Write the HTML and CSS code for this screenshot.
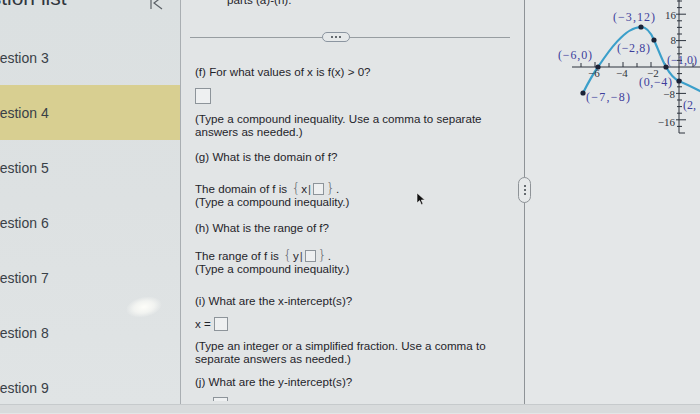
FILE: index.html
```html
<!DOCTYPE html>
<html lang="en">
<head>
<meta charset="utf-8">
<title>Question list</title>
<link rel="stylesheet" href="styles.css">
</head>
<body>
<div class="app">
  <aside class="sidebar">
    <div class="sidebar-head">
      <span class="sidebar-title">Question list</span>
      <svg class="collapse-icon" viewBox="0 0 16 16" width="16" height="16"><path d="M3 1V13M14 1L6 7L14 13" fill="none" stroke="#5b6167" stroke-width="1.2"/></svg>
    </div>
    <ul class="q-list">
      <li class="q-item"><span class="q-label">Question 3</span></li>
      <li class="q-item active"><span class="q-label">Question 4</span></li>
      <li class="q-item"><span class="q-label">Question 5</span></li>
      <li class="q-item"><span class="q-label">Question 6</span></li>
      <li class="q-item"><span class="q-label">Question 7</span></li>
      <li class="q-item"><span class="q-label">Question 8</span></li>
      <li class="q-item"><span class="q-label">Question 9</span></li>
    </ul>
    <span class="glare"></span>
  </aside>

  <main class="main">
    <div class="main-scroll">
      <p class="line intro">parts (a)-(h).</p>
      <div class="divider-row">
        <span class="rule rule-left"></span>
        <span class="more-btn"><i></i><i></i><i></i></span>
        <span class="rule"></span>
      </div>
      <p class="line q-f">(f) For what values of x is f(x) &gt; 0?</p>
      <span class="answer-box box-f"></span>
      <p class="line hint-f">(Type a compound inequality. Use a comma to separate<br>answers as needed.)</p>
      <p class="line q-g">(g) What is the domain of f?</p>
      <p class="line ans-g">The domain of f is <span class="brace">{</span>x<span class="bar">|</span><span class="answer-box small"></span><span class="brace">}</span>.</p>
      <p class="line">(Type a compound inequality.)</p>
      <p class="line q-h">(h) What is the range of f?</p>
      <p class="line ans-h">The range of f is <span class="brace">{</span>y<span class="bar">|</span><span class="answer-box small"></span><span class="brace">}</span>.</p>
      <p class="line">(Type a compound inequality.)</p>
      <p class="line q-i">(i) What are the x-intercept(s)?</p>
      <p class="line ans-i">x = <span class="answer-box mid"></span></p>
      <p class="line hint-i">(Type an integer or a simplified fraction. Use a comma to<br>separate answers as needed.)</p>
      <p class="line q-j">(j) What are the y-intercept(s)?</p>
      <span class="answer-box box-j"></span>
    </div>
    <svg class="cursor" viewBox="0 0 10 14" width="10" height="14"><path d="M1 1L1 11L3.6 8.6L5.4 12.8L7 12.1L5.3 8L8.8 8Z" fill="#111" stroke="#f4f4f4" stroke-width="0.6"/></svg>
  </main>

  <div class="splitter"><span class="handle"><i></i><i></i><i></i></span></div>

  <section class="graph-panel">
    <svg class="graph" viewBox="525 0 175 140" width="175" height="140">
      <g stroke="#2c333d" stroke-width="1" fill="none">
        <path d="M679 0V133H685"/>
        <path d="M572 67H700"/>
        <path d="M677 1H682M677 7.6H682M676 14.2H686M677 20.8H682M677 27.4H682M677 34H682M676 40.6H686M677 47.2H682M677 53.8H682M677 60.4H682M677 73.6H682M677 80.2H682M677 86.8H682M676 93.4H686M677 100H682M677 106.6H682M677 113.2H682M676 119.8H686M677 126.4H682"/>
        <path d="M581 67V63M595 67V62M609 67V63M623 67V62M637 67V63M651 67V62M665 67V63M693 67V63"/>
      </g>
      <path d="M583 93C588 83 593 74 598 67C608 52 625 27 641 27C647 27 651 33 654 40C658 49 662 60 666 67C670 74 674 79 679 81C686 84 694 88 702 92" fill="none" stroke="#3b9fca" stroke-width="2.2"/>
      <g fill="#1b2236">
        <circle cx="583" cy="93" r="2.6"/>
        <circle cx="598" cy="67" r="2.6"/>
        <circle cx="641" cy="27" r="2.6"/>
        <circle cx="654" cy="40" r="2.6"/>
        <circle cx="666" cy="67" r="2.6"/>
        <circle cx="679" cy="81" r="2.6"/>
      </g>
      <g class="pt-label">
        <text x="613" y="21" textLength="42">(−3,12)</text>
        <text x="558" y="59" textLength="34">(−6,0)</text>
        <text x="617" y="52" textLength="33">(−2,8)</text>
        <text x="667" y="64" textLength="30">(−1,0)</text>
        <text x="639" y="86" textLength="33">(0,−4)</text>
        <text x="586" y="101" textLength="44">(−7,−8)</text>
        <text x="683" y="109">(2,</text>
      </g>
      <g class="axis-label">
        <text x="676" y="19" text-anchor="end">16</text>
        <text x="676" y="44" text-anchor="end">8</text>
        <text x="675" y="98" text-anchor="end">−8</text>
        <text x="675" y="126" text-anchor="end">−16</text>
        <text x="588" y="77">−6</text>
        <text x="616" y="77">−4</text>
        <text x="647" y="77">−2</text>
      </g>
    </svg>
  </section>
</div>
<div class="footer-strip"></div>
</body>
</html>
```

FILE: styles.css
```css
* { box-sizing: border-box; }

html, body {
  margin: 0;
  padding: 0;
}

body {
  width: 700px;
  height: 414px;
  overflow: hidden;
  background: #e3e6e7;
  font-family: "Liberation Sans", Arial, sans-serif;
  color: #1f242a;
}

.app {
  display: flex;
  height: 405px;
  border-bottom: 1px solid #c6cacc;
}

/* ---------- sidebar ---------- */
.sidebar {
  position: relative;
  flex: none;
  width: 181px;
  border-right: 1px solid #a9aeb2;
  background: linear-gradient(180deg, #dbe0e1 0%, #dde1e2 50%, #e0e4e5 100%);
  overflow: hidden;
  display: flex;
  flex-direction: column;
}

.sidebar-head {
  flex: none;
  height: 30px;
  display: flex;
  justify-content: space-between;
  align-items: flex-start;
}

.sidebar-title {
  margin: -13px 0 0 -49px;
  font-size: 21px;
  line-height: 21px;
  color: #30363d;
  white-space: nowrap;
}

.collapse-icon {
  flex: none;
  margin: -4px 16px 0 0;
}

.q-list {
  list-style: none;
  margin: 0;
  padding: 0;
}

.q-item {
  height: 55px;
  display: flex;
  align-items: center;
  font-size: 14px;
  color: #394047;
  white-space: nowrap;
}

.q-item.active {
  background: #d8cf91;
}

.q-label {
  margin-left: -19px;
}

.glare {
  position: absolute;
  left: 126px;
  top: 297px;
  width: 36px;
  height: 20px;
  border-radius: 50%;
  background: radial-gradient(ellipse at center, rgba(255,255,250,0.95) 0%, rgba(255,255,250,0.6) 40%, rgba(255,255,250,0) 72%);
  transform: rotate(-12deg);
}

/* ---------- main ---------- */
.main {
  position: relative;
  flex: none;
  width: 343px;
  background: #e2e5e6;
}

.main-scroll {
  height: 401px;
  overflow: hidden;
  padding-left: 14px;
}

.line {
  margin: 0;
  font-size: 11.6px;
  line-height: 13px;
  white-space: nowrap;
}

.intro {
  margin-top: -7px;
  margin-left: 32px;
}

.divider-row {
  display: flex;
  align-items: center;
  height: 12px;
  margin: 25px 14px 0 -5px;
}

.rule {
  flex: 1;
  height: 1px;
  background: #979da1;
}

.rule-left {
  flex: 0 0 132px;
}

.more-btn {
  flex: none;
  width: 28px;
  height: 10px;
  border: 1px solid #8b95a0;
  border-radius: 6px;
  background: #e6e9ea;
  display: flex;
  align-items: center;
  justify-content: center;
  gap: 2px;
}

.more-btn i,
.handle i {
  display: block;
  width: 2px;
  height: 2px;
  border-radius: 50%;
  background: #3a4047;
}

.answer-box {
  display: inline-block;
  border: 1px solid #8d949a;
  background: #eef0f1;
  vertical-align: middle;
}

.box-f {
  display: block;
  width: 16px;
  height: 16px;
  margin-top: 10px;
}

.answer-box.small {
  width: 11px;
  height: 12px;
  margin: -2px 1px 0 2px;
}

.answer-box.mid {
  width: 14px;
  height: 14px;
  margin-top: -2px;
}

.box-j {
  display: block;
  width: 15px;
  height: 14px;
  margin: 9px 0 0 18px;
}

.brace {
  font-family: "DejaVu Sans", sans-serif;
  font-weight: 300;
  font-size: 14px;
  color: #5c6268;
  margin: 0 1px;
}

.bar {
  color: #444a50;
  margin: 0 0 0 1px;
}

.hint-f { margin-top: 8px; }
.q-f { margin-top: 22px; }
.q-g { margin-top: 12px; }
.ans-g { margin-top: 19px; }
.q-h { margin-top: 13px; }
.ans-h { margin-top: 15px; }
.q-i { margin-top: 19px; }
.ans-i { margin-top: 10px; }
.hint-i { margin-top: 8px; }
.q-j { margin-top: 10px; }

.cursor {
  position: absolute;
  left: 235px;
  top: 192px;
}

/* ---------- splitter ---------- */
.splitter {
  position: relative;
  flex: none;
  width: 1px;
  background: #8e9397;
}

.handle {
  position: absolute;
  left: -6px;
  top: 177px;
  width: 13px;
  height: 26px;
  border: 1px solid #8e9397;
  border-radius: 7px;
  background: #e6e9ea;
  display: flex;
  flex-direction: column;
  align-items: center;
  justify-content: center;
  gap: 2px;
}

/* ---------- graph ---------- */
.graph-panel {
  flex: 1;
  background: #e4e7e8;
  overflow: hidden;
}

.graph {
  display: block;
}

.pt-label text {
  font-family: "Liberation Serif", "Times New Roman", serif;
  font-size: 12px;
  fill: #3d3e9c;
}

.axis-label text {
  font-family: "Liberation Serif", "Times New Roman", serif;
  font-size: 11px;
  fill: #30343c;
}

.footer-strip {
  height: 8px;
  background: #d8dbdc;
}
```
